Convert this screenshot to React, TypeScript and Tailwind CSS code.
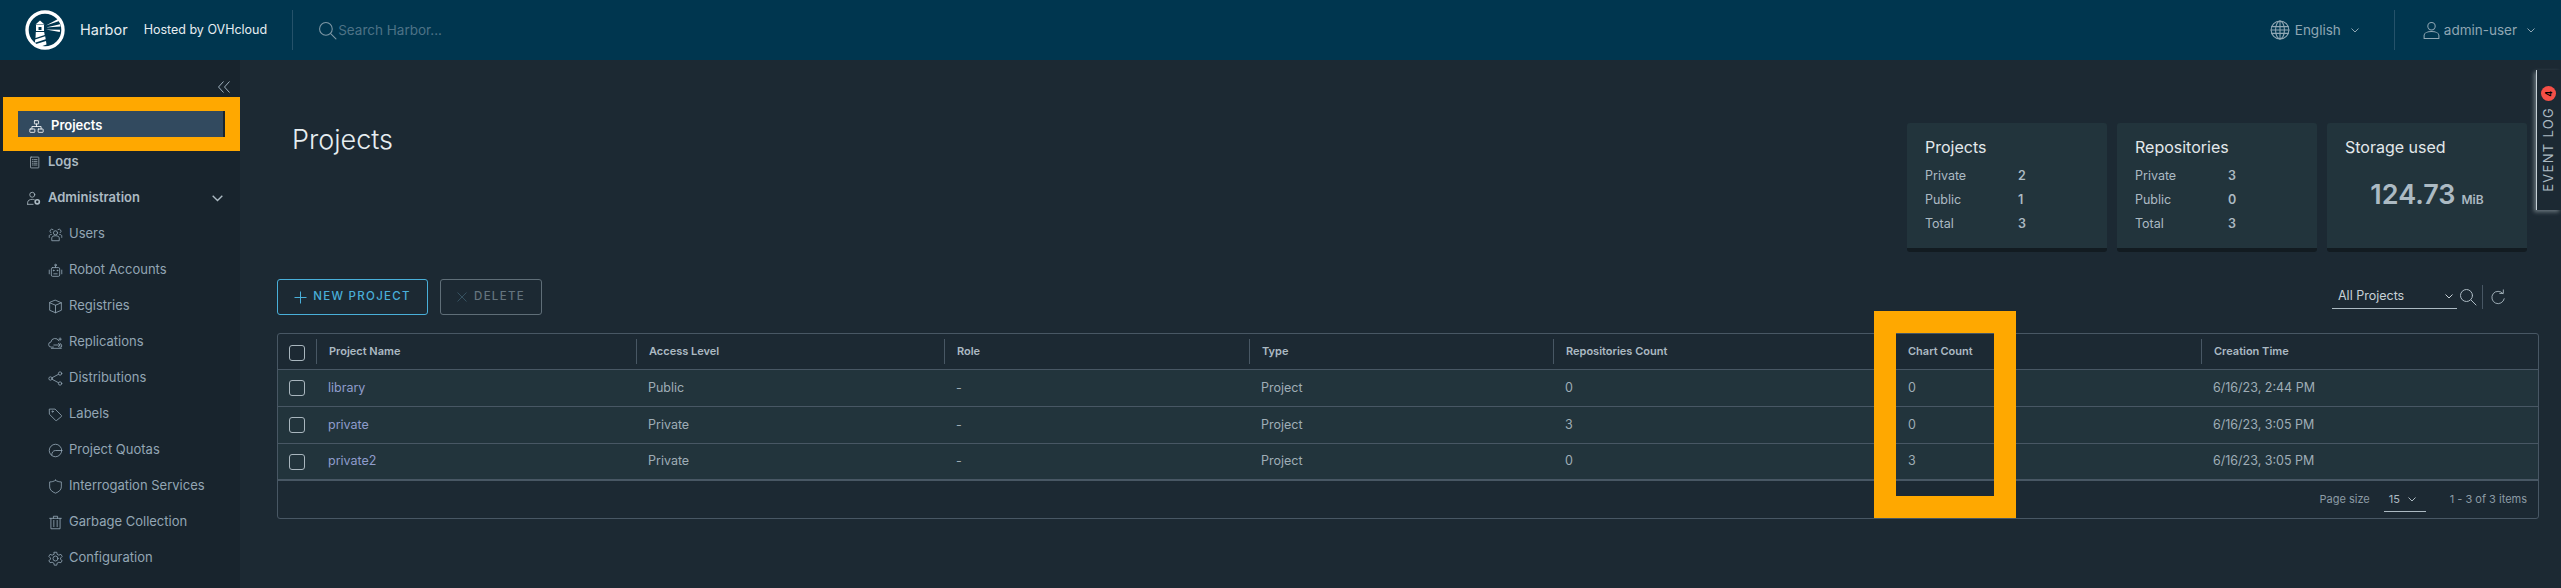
import type { ReactNode } from "react";

const Icon = ({ size = 16, className = "", children }: { size?: number; className?: string; children: ReactNode }) => (
  <svg width={size} height={size} viewBox="0 0 36 36" fill="none" stroke="currentColor" strokeWidth={2} strokeLinecap="round" strokeLinejoin="round" className={`shrink-0 ${className}`}>
    {children}
  </svg>
);

const Chevron = ({ className = "" }: { className?: string }) => (
  <svg width="8" height="5" viewBox="0 0 8 5" fill="none" stroke="currentColor" className={className}>
    <path d="M.5.5 4 4 7.500.5" />
  </svg>
);

const Logo = () => (
  <svg width="40" height="40" viewBox="0 0 40 40" className="shrink-0">
    <circle cx="20" cy="20" r="18" fill="none" stroke="#fff" strokeWidth="3.4" />
    <path d="M10.500 14.500 15 10.500l4.500 4z" fill="#fff" />
    <path d="M11 15h8v6h-8zM13.500 17v3h3v-3z" fill="#fff" fillRule="evenodd" />
    <path d="M10.800 22h8.400l.5 3-9.200 3zM10.200 29.500l10-3.200.5 3-10.800 3.500zM9.500 34.500l11.500-3.500.5 3.400-8 3z" fill="#fff" />
    <path d="M21 15.500 33 9l1.200 2zM21 17.500l14-3.300.5 2.200zM21 19.500l14 .2-.2 2.300z" fill="#fff" />
  </svg>
);

const icons: Record<string, ReactNode> = {
  projects: (
    <>
      <rect x="13" y="4" width="10" height="8" rx="1" />
      <path d="M18 12v6M7 24v-6h22v6" />
      <rect x="2" y="24" width="12" height="8" rx="1" />
      <rect x="22" y="24" width="12" height="8" rx="1" />
    </>
  ),
  logs: (
    <>
      <rect x="7" y="3" width="23" height="30" rx="1.500" />
      <path d="M12 10h2M17 10h8M12 15h2M17 15h8M12 20h2M17 20h8M12 25h2M17 25h8" />
    </>
  ),
  admin: (
    <>
      <circle cx="15" cy="9" r="6" />
      <path d="M4 32v-5c0-4 5-7 11-7 2 0 3 .2 5 1M4 32h13" />
      <circle cx="27" cy="26" r="5" strokeWidth={4} />
    </>
  ),
  users: (
    <>
      <circle cx="18" cy="14" r="5" />
      <path d="M9 32v-6c0-3 4-5 9-5s9 2 9 5v6z" />
      <path d="M12 6a4.500 4.500 0 0 0-5 8M24 6a4.500 4.500 0 0 1 5 8M3 25v-3c0-3 2-4 5-4M33 25v-3c0-3-2-4-5-4" />
    </>
  ),
  robot: (
    <>
      <rect x="8" y="11" width="20" height="21" rx="3" />
      <circle cx="18" cy="5" r="2" />
      <path d="M18 7v4M3 17v9M33 17v9M14 26h8" />
      <circle cx="13.500" cy="18" r="1" />
      <circle cx="22.500" cy="18" r="1" />
    </>
  ),
  registries: (
    <path d="M18 3 32 9v18l-14 6-14-6V9zM4 9l14 6 14-6M18 15v18" />
  ),
  replications: (
    <>
      <path d="M13 29H8a6 6 0 0 1-1-12 10 10 0 0 1 19-3M29 20a6 6 0 0 1 3 9h-4" />
      <path d="M14 24h15M25 20l4 4-4 4M8 32h24M29 7v6M26 10h6" />
    </>
  ),
  distributions: (
    <>
      <circle cx="6" cy="18" r="4" />
      <circle cx="29" cy="6" r="4" />
      <circle cx="29" cy="30" r="4" />
      <path d="M10 16 25 8M10 20l15 8" />
    </>
  ),
  labels: (
    <>
      <path d="M4 5h13l15 15a2 2 0 0 1 0 3L21 32a2 2 0 0 1-3 0L4 18z" />
      <circle cx="11" cy="11" r="1.500" />
    </>
  ),
  quotas: (
    <>
      <circle cx="18" cy="18" r="15" />
      <path d="M9 29c0-6 3-11 9-11h15" />
    </>
  ),
  shield: <path d="M18 3c4 3 9 4 14 4v12c0 7-6 12-14 15C10 31 4 26 4 19V7c5 0 10-1 14-4z" />,
  trash: (
    <>
      <path d="M4 8h28M13 8V3h10v5M7 8v25h22V8M14 13v15M22 13v15" />
    </>
  ),
  config: (
    <>
      <circle cx="18" cy="18" r="6" />
      <path d="M15 3h6l1 5 4 2 5-2 3 5-4 4v3l4 3-3 5-5-1-4 2-1 5h-6l-1-5-4-2-5 1-3-5 4-3v-3L2 13l3-5 5 2 4-2z" />
    </>
  ),
  search: (
    <>
      <circle cx="15" cy="15" r="12" />
      <path d="m24 24 10 10" />
    </>
  ),
  globe: (
    <>
      <circle cx="18" cy="18" r="16" />
      <ellipse cx="18" cy="18" rx="8" ry="16" />
      <path d="M18 2v32M3 12h30M3 24h30M2 18h32" />
    </>
  ),
  user: (
    <>
      <circle cx="18" cy="10" r="7" />
      <path d="M4 33v-6c0-4 6-7 14-7s14 3 14 7v6z" />
    </>
  ),
  refresh: <path d="M29 10a14 14 0 1 0 3 12M22 10h8V2" />,
};

const subItems = [
  ["users", "Users"],
  ["robot", "Robot Accounts"],
  ["registries", "Registries"],
  ["replications", "Replications"],
  ["distributions", "Distributions"],
  ["labels", "Labels"],
  ["quotas", "Project Quotas"],
  ["shield", "Interrogation Services"],
  ["trash", "Garbage Collection"],
  ["config", "Configuration"],
];

const columns = "grid grid-cols-[38px_320px_308px_305px_304px_343px_305px_1fr]";

const headers = ["Project Name", "Access Level", "Role", "Type", "Repositories Count", "Chart Count", "Creation Time"];

const rows = [
  ["library", "Public", "-", "Project", "0", "0", "6/16/23, 2:44 PM"],
  ["private", "Private", "-", "Project", "3", "0", "6/16/23, 3:05 PM"],
  ["private2", "Private", "-", "Project", "0", "3", "6/16/23, 3:05 PM"],
];

const Checkbox = () => <div className="h-4 w-4 rounded-[3px] border border-[#a9b6be]" />;

const StatCard = ({ title, values }: { title: string; values: [string, string][] }) => (
  <div className="h-[129px] w-[200px] rounded-[3px] border-b-4 border-[#121b21] bg-[#22343c] pl-[18px] pt-[14px]">
    <div className="text-[16px] leading-5 text-[#e3e8eb]">{title}</div>
    <div className="mt-[7px]">
      {values.map(([k, v]) => (
        <div key={k} className="flex h-6 items-center text-[12.500px] text-[#acbac3]">
          <span className="w-[93px]">{k}</span>
          <span className="font-semibold">{v}</span>
        </div>
      ))}
    </div>
  </div>
);

const App = () => {
  return (
    <div className="relative h-[588px] w-full overflow-hidden bg-[#1c2933] font-['Inter',sans-serif]">
      <header className="flex h-[60px] items-center bg-[#00364f] pl-[25px] pr-[26px]">
        <Logo />
        <span className="ml-[15px] text-[14.500px] text-[#e6edf1]">Harbor</span>
        <span className="ml-[16px] text-[12.500px] text-[#e6edf1]">Hosted by OVHcloud</span>
        <div className="ml-[25px] h-10 w-px bg-[#25526a]" />
        <Icon size={19} className="ml-[25px] text-[#7f98a6]">{icons.search}</Icon>
        <span className="ml-[1px] text-[13.500px] text-[#4d7286]">Search Harbor...</span>
        <div className="ml-auto flex items-center gap-[5px] text-[#8fa6b3]">
          <Icon size={20}>{icons.globe}</Icon>
          <span className="text-[13.500px]">English</span>
          <Chevron className="ml-[5px]" />
        </div>
        <div className="ml-[35px] h-10 w-px bg-[#25526a]" />
        <div className="ml-[27px] flex items-center gap-[3px] text-[#8fa6b3]">
          <Icon size={19}>{icons.user}</Icon>
          <span className="text-[13.500px]">admin-user</span>
          <Chevron className="ml-[7px]" />
        </div>
      </header>

      <div className="flex h-[528px]">
        <aside className="w-[240px] shrink-0 bg-[#18242d] pl-px">
          <div className="flex h-[48px] items-center justify-end pr-[10px] pt-[5px] text-[#9fb0bd]">
            <svg width="12" height="12" viewBox="0 0 12 12" fill="none" stroke="currentColor">
              <path d="M5.500.5.500 6l5 5.500M11.500.5 6.500 6l5 5.500" />
            </svg>
          </div>
          <nav>
            <div className="mx-[17px] flex h-9 items-center bg-[#324a5f] pl-[11px] text-[13px] font-semibold text-white">
              <Icon size={15}>{icons.projects}</Icon>
              <span className="ml-[7px]">Projects</span>
            </div>
            <div className="flex h-9 items-center pl-[27px] text-[13px] font-semibold text-[#acbac3]">
              <Icon size={13}>{icons.logs}</Icon>
              <span className="ml-[7px]">Logs</span>
            </div>
            <div className="flex h-9 items-center pl-[25px] pr-[17px] text-[13px] font-semibold text-[#acbac3]">
              <Icon size={15}>{icons.admin}</Icon>
              <span className="ml-[7px]">Administration</span>
              <Chevron className="ml-auto h-[7px] w-[11px]" />
            </div>
            {subItems.map(([icon, label]) => (
              <div key={label} className="flex h-9 items-center pl-[47px] text-[13px] text-[#93a6b4]">
                <Icon size={15}>{icons[icon]}</Icon>
                <span className="ml-[6px]">{label}</span>
              </div>
            ))}
          </nav>
        </aside>

        <main className="min-w-0 flex-1 pl-[37px] pr-[22px] pt-[63px]">
          <div className="flex items-start justify-between pr-[12px]">
            <h1 className="ml-[15px] text-[27px] font-light leading-[34px] text-[#e6edf1]">Projects</h1>
            <div className="flex gap-[10px]">
              <StatCard title="Projects" values={[["Private", "2"], ["Public", "1"], ["Total", "3"]]} />
              <StatCard title="Repositories" values={[["Private", "3"], ["Public", "0"], ["Total", "3"]]} />
              <div className="h-[129px] w-[200px] rounded-[3px] border-b-4 border-[#121b21] bg-[#22343c] pl-[18px] pt-[14px]">
                <div className="text-[16px] leading-5 text-[#e3e8eb]">Storage used</div>
                <div className="mt-[20px] flex items-baseline justify-center pr-[18px] text-[#acbac3]">
                  <span className="text-[27px] font-semibold leading-9">124.73</span>
                  <span className="ml-[6px] text-[12px] font-semibold">MiB</span>
                </div>
              </div>
            </div>
          </div>

          <div className="mt-[27px] flex h-9 items-center">
            <button className="flex h-9 w-[151px] items-center justify-center rounded-[3px] border border-[#49afd9] text-[11.500px] font-medium tracking-[1.300px] text-[#49afd9]">
              <svg width="13" height="13" viewBox="0 0 13 13" stroke="currentColor" className="mr-[6px]">
                <path d="M6.500.5v12M.5 6.500h12" />
              </svg>
              NEW PROJECT
            </button>
            <button className="ml-3 flex h-9 w-[102px] items-center justify-center rounded-[3px] border border-[#5f6e78] text-[11.500px] font-medium tracking-[1.300px] text-[#65747e]">
              <svg width="10" height="10" viewBox="0 0 10 10" stroke="#35505f" className="mr-[7px]">
                <path d="m.5.500 9 9M9.500.5l-9 9" />
              </svg>
              DELETE
            </button>
            <div className="ml-auto flex items-center pr-[33px] text-[#acbac3]">
              <div className="flex h-[24px] w-[125px] items-center justify-between border-b border-[#acbac3] pl-[6px] pr-[4px] text-[12.500px] text-[#c7d1d7]">
                <span>All Projects</span>
                <Chevron />
              </div>
              <Icon size={18} className="ml-[2px]">{icons.search}</Icon>
              <div className="ml-[5px] h-[24px] w-px bg-[#485764]" />
              <Icon size={16} className="ml-[7px]">{icons.refresh}</Icon>
            </div>
          </div>

          <div className="mt-[18px] h-[186px] rounded-[3px] border border-[#485764]">
            <div className={`${columns} h-9 border-b border-[#485764]`}>
              <div className="flex items-center justify-center pr-[1px] pt-[3px]">
                <Checkbox />
              </div>
              {headers.map((h) => (
                <div key={h} className="flex items-center">
                  <div className={h === "Chart Count" ? "pl-3 text-[11px] font-semibold text-[#acbac3]" : "flex h-[25px] items-center border-l border-[#485764] pl-3 text-[11px] font-semibold text-[#acbac3]"}>
                    {h}
                  </div>
                </div>
              ))}
            </div>
            {rows.map((row, i) => (
              <div key={row[0]} className={`${columns} h-[37px] bg-[#22343c] ${i === 2 ? "border-b-2" : "border-b"} border-[#485764]`}>
                <div className="flex items-center justify-center pr-[1px]">
                  <Checkbox />
                </div>
                {row.map((cell, j) => (
                  <div key={j} className={`flex items-center pl-3 text-[12.500px] ${j === 0 ? "text-[#8f9ccc]" : "text-[#9fadb6]"}`}>
                    {cell}
                  </div>
                ))}
              </div>
            ))}
            <div className="flex h-[37px] items-center justify-end pr-[11px] text-[11px] text-[#8c9ba5]">
              <span>Page size</span>
              <div className="ml-[14px] flex h-[24px] w-[42px] items-center gap-[8px] border-b border-[#acbac3] pl-[5px] pt-[1px] text-[#acbac3]">
                <span>15</span>
                <Chevron />
              </div>
              <span className="ml-6">1 - 3 of 3 items</span>
            </div>
          </div>
        </main>
      </div>

      {/* orange annotation boxes from the screenshot */}
      <div className="absolute left-[3px] top-[97px] h-[54px] w-[237px] border-x-[15px] border-y-[14px] border-[#ffa800]" />
      <div className="absolute left-[1874px] top-[311px] h-[207px] w-[142px] border-[22px] border-[#ffa800]" />

      <div className="absolute left-[2536px] top-[70px] flex h-[140px] w-[25px] flex-col items-center border-l border-[#c5d0d6] bg-[#1c2933] pr-[1px] pt-[16px] shadow-[-2px_2px_4px_rgba(200,210,216,0.45)]">
        <div className="flex h-[15px] w-[15px] items-center justify-center rounded-full bg-[#f54f47]">
          <span className="-rotate-90 text-[9px] font-semibold text-black">4</span>
        </div>
        <span className="mt-[6px] rotate-180 text-[13px] tracking-[1.300px] text-[#acbac3] [writing-mode:vertical-rl]">EVENT LOG</span>
      </div>
    </div>
  );
};

export default App;
